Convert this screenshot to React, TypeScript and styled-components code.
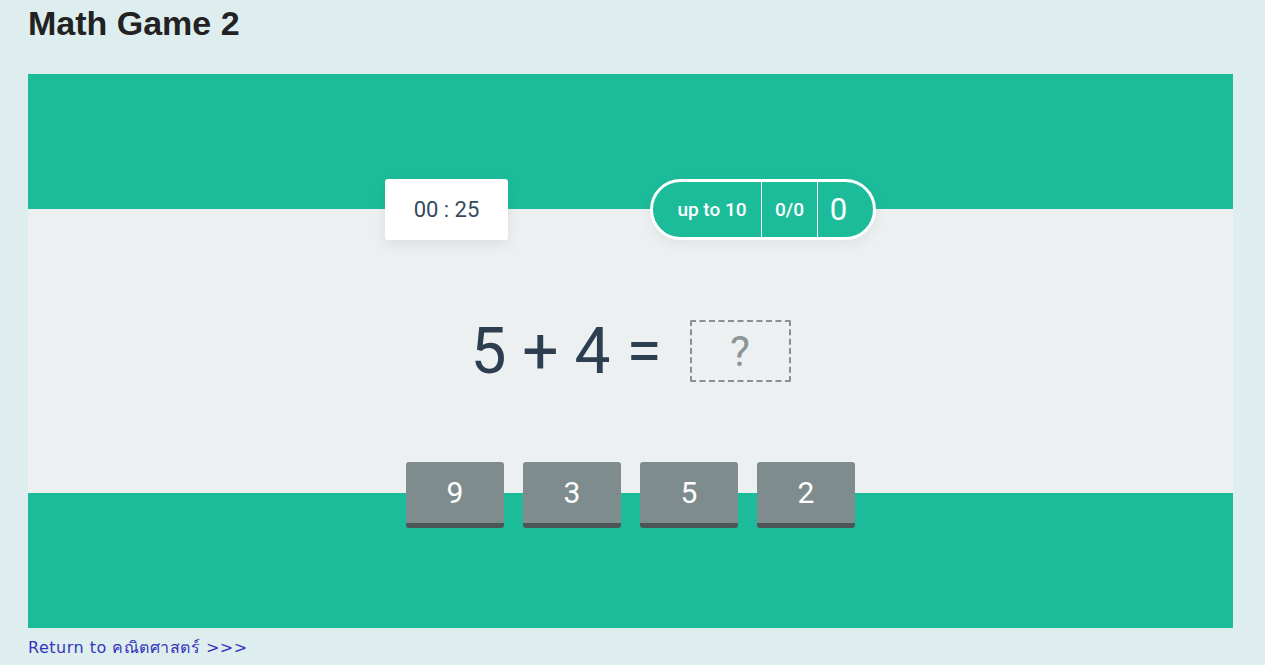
import React from 'react';
import styled, {createGlobalStyle} from "styled-components";

const GlobalStyle = createGlobalStyle`
  body {
    margin: 0;
    background: #deeeee;
    font-family: "Liberation Sans", Arial, sans-serif;
  }
`

const Page = styled.div`
  padding: 0 32px 0 28px;
`

const Title = styled.h1`
  margin: 0;
  padding-top: 4px;
  height: 70px;
  font-family: "Liberation Sans", Arial, sans-serif;
  font-size: 34px;
  font-weight: 700;
  color: #222;
  line-height: 38px;
`

const Board = styled.div`
  height: 554px;
  background: linear-gradient(#1cbc9b 0 135px, #ecf0f1 135px 419px, #1cbc9b 419px);
  display: flex;
  flex-direction: column;
  align-items: center;
  padding-top: 105px;
  box-sizing: border-box;
  font-family: Roboto, sans-serif;
`

const TopRow = styled.div`
  display: flex;
  gap: 142px;
  height: 61px;
`

const Timer = styled.div`
  width: 123px;
  height: 61px;
  background: #fff;
  border-radius: 3px;
  box-shadow: 0 4px 14px rgba(0, 0, 0, 0.08);
  display: flex;
  align-items: center;
  justify-content: center;
  font-size: 22px;
  color: #34495e;
`

const Score = styled.div`
  display: flex;
  height: 61px;
  box-sizing: border-box;
  border: 3px solid #fff;
  border-radius: 31px;
  background: #1cbc9b;
  color: #fff;
  overflow: hidden;
  box-shadow: 0 4px 14px rgba(0, 0, 0, 0.06);
`

const ScoreCell = styled.div<{ $w: number; $pad: string; $big?: boolean; $last?: boolean }>`
  width: ${p => p.$w}px;
  box-sizing: border-box;
  display: flex;
  align-items: center;
  justify-content: center;
  padding: ${p => p.$pad};
  font-size: ${p => p.$big ? "31px" : "19px"};
  font-weight: ${p => p.$big ? 400 : 500};
  border-right: ${p => p.$last ? "none" : "1px solid #fff"};
`

const Equation = styled.div`
  display: flex;
  align-items: center;
  gap: 28px;
  margin-top: 80px;
  height: 62px;
  color: #2c3e50;
  font-size: 64px;
`

const Answer = styled.div`
  width: 101px;
  height: 62px;
  box-sizing: border-box;
  border: 2px dashed #8a8f90;
  border-radius: 2px;
  display: flex;
  align-items: center;
  justify-content: center;
  font-size: 42px;
  color: #8a9595;
`

const Choices = styled.div`
  display: flex;
  gap: 19px;
  margin-top: 80px;
`

const Choice = styled.button`
  width: 98px;
  height: 66px;
  border: none;
  border-bottom: 5px solid #4d5656;
  border-radius: 3px;
  background: #7f8c8d;
  color: #fff;
  font-family: Roboto, sans-serif;
  font-size: 30px;
  padding: 0;
  cursor: pointer;
`

const ReturnLink = styled.a`
  display: block;
  margin-top: 7px;
  font-family: "DejaVu Sans", "Noto Sans", sans-serif;
  font-size: 16px;
  color: #3434c0;
  text-decoration: none;
  letter-spacing: 0.5px;
`

export default function App() {
    const choices = [9, 3, 5, 2];
    return (
        <Page>
            <GlobalStyle/>
            <Title>Math Game 2</Title>
            <Board>
                <TopRow>
                    <Timer>00 : 25</Timer>
                    <Score>
                        <ScoreCell $w={109} $pad="0 0 0 10px">up to 10</ScoreCell>
                        <ScoreCell $w={56} $pad="0">0/0</ScoreCell>
                        <ScoreCell $w={55} $pad="0 14px 0 0" $big $last>0</ScoreCell>
                    </Score>
                </TopRow>
                <Equation>
                    <span>5 + 4 =</span>
                    <Answer>?</Answer>
                </Equation>
                <Choices>
                    {choices.map(c => <Choice key={c}>{c}</Choice>)}
                </Choices>
            </Board>
            <ReturnLink href="#">Return to คณิตศาสตร์ &gt;&gt;&gt;</ReturnLink>
        </Page>
    );
}
